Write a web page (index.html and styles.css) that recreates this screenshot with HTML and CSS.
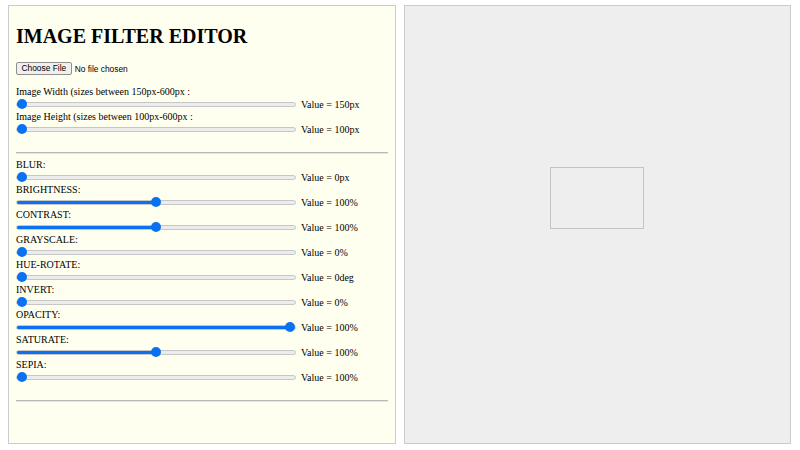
FILE: index.html
```html
<!DOCTYPE html>
<html lang="en">
<head>
<meta charset="utf-8">
<title>Image Filter Editor</title>
<link rel="stylesheet" href="styles.css">
</head>
<body>
<div class="app">
  <section class="panel editor">
    <h1 class="title">IMAGE FILTER EDITOR</h1>
    <input type="file" class="file" accept="image/*">

    <div class="group size-group">
      <div class="control">
        <label class="label">Image Width (sizes between 150px-600px :</label>
        <div class="row"><input type="range" class="slider" min="150" max="600" value="150" style="--fill: 5px"><span class="value">Value = 150px</span></div>
      </div>
      <div class="control">
        <label class="label">Image Height (sizes between 100px-600px :</label>
        <div class="row"><input type="range" class="slider" min="100" max="600" value="100" style="--fill: 5px"><span class="value">Value = 100px</span></div>
      </div>
    </div>

    <hr class="rule">

    <div class="group filter-group">
      <div class="control">
        <label class="label">BLUR:</label>
        <div class="row"><input type="range" class="slider" min="0" max="10" value="0" style="--fill: 5px"><span class="value">Value = 0px</span></div>
      </div>
      <div class="control">
        <label class="label">BRIGHTNESS:</label>
        <div class="row"><input type="range" class="slider" min="0" max="200" value="100" style="--fill: 140px"><span class="value">Value = 100%</span></div>
      </div>
      <div class="control">
        <label class="label">CONTRAST:</label>
        <div class="row"><input type="range" class="slider" min="0" max="200" value="100" style="--fill: 140px"><span class="value">Value = 100%</span></div>
      </div>
      <div class="control">
        <label class="label">GRAYSCALE:</label>
        <div class="row"><input type="range" class="slider" min="0" max="100" value="0" style="--fill: 5px"><span class="value">Value = 0%</span></div>
      </div>
      <div class="control">
        <label class="label">HUE-ROTATE:</label>
        <div class="row"><input type="range" class="slider" min="0" max="360" value="0" style="--fill: 5px"><span class="value">Value = 0deg</span></div>
      </div>
      <div class="control">
        <label class="label">INVERT:</label>
        <div class="row"><input type="range" class="slider" min="0" max="100" value="0" style="--fill: 5px"><span class="value">Value = 0%</span></div>
      </div>
      <div class="control">
        <label class="label">OPACITY:</label>
        <div class="row"><input type="range" class="slider" min="0" max="100" value="100" style="--fill: 275px"><span class="value">Value = 100%</span></div>
      </div>
      <div class="control">
        <label class="label">SATURATE:</label>
        <div class="row"><input type="range" class="slider" min="0" max="200" value="100" style="--fill: 140px"><span class="value">Value = 100%</span></div>
      </div>
      <div class="control">
        <label class="label">SEPIA:</label>
        <div class="row"><input type="range" class="slider" min="0" max="100" value="0" style="--fill: 5px"><span class="value">Value = 100%</span></div>
      </div>
    </div>

    <hr class="rule">
  </section>

  <section class="panel preview">
    <div class="frame"></div>
  </section>
</div>
</body>
</html>
```

FILE: styles.css
```css
* {
  box-sizing: border-box;
}

html, body {
  margin: 0;
  padding: 0;
  background: #ffffff;
}

body {
  font-family: "Liberation Serif", "Times New Roman", serif;
  font-size: 10px;
  color: #000;
}

.app {
  display: grid;
  grid-template-columns: minmax(0, 1fr) minmax(0, 1fr);
  gap: 8px;
  height: 450px;
  padding: 5px 9px 6px 8px;
}

.panel {
  min-width: 0;
  overflow: hidden;
  border: 1px solid #cbcbcb;
}

.editor {
  background: #fffff0;
  padding: 6px 7px;
  display: flex;
  flex-direction: column;
}

.title {
  font-size: 20px;
  line-height: 22px;
  font-weight: bold;
  margin: 13px 0 14.5px;
}

.file {
  display: block;
  width: 200px;
  height: 13px;
  font-family: "Liberation Sans", Arial, sans-serif;
  font-size: 8.4px;
  line-height: 13px;
  color: #000;
  margin: 0;
  padding: 0;
}

.file::file-selector-button {
  font-family: "Liberation Sans", Arial, sans-serif;
  font-size: 8.4px;
  height: 13px;
  padding: 0 4.5px;
  margin: 0 3px 0 0;
  border: 1px solid #8f8f8f;
  border-radius: 2px;
  background: #efefef;
  color: #000;
}

.size-group {
  margin-top: 11px;
}

.control {
  display: flex;
  flex-direction: column;
}

.label {
  display: block;
  height: 12px;
  line-height: 12px;
  white-space: nowrap;
}

.row {
  display: flex;
  align-items: center;
  height: 13px;
}

.value {
  margin-left: 5px;
  line-height: 12px;
  padding-top: 1px;
  white-space: nowrap;
}

.slider {
  -webkit-appearance: none;
  appearance: none;
  width: 280px;
  height: 10px;
  margin: 0;
  padding: 0;
  background: transparent;
  flex: none;
}

.slider::-webkit-slider-runnable-track {
  height: 5px;
  border: 1px solid #c6c6c6;
  border-radius: 3px;
  background: linear-gradient(to right, #0a72f2 var(--fill), #ececec var(--fill));
}

.slider::-webkit-slider-thumb {
  -webkit-appearance: none;
  appearance: none;
  width: 10px;
  height: 10px;
  margin-top: -3.5px;
  border: none;
  border-radius: 50%;
  background: #0a72f2;
}

.rule {
  height: 0;
  width: 100%;
  margin: 16px 0 5px;
  border: none;
  border-top: 1px solid #b9b9b9;
  border-bottom: 1px solid #e4e4e0;
}

.preview {
  background: #eeeeee;
  display: flex;
  justify-content: center;
  align-items: flex-start;
  padding-top: 161px;
}

.frame {
  width: 94px;
  height: 62px;
  border: 1px solid #c4c4c4;
  background: #eeeeee;
}
```
